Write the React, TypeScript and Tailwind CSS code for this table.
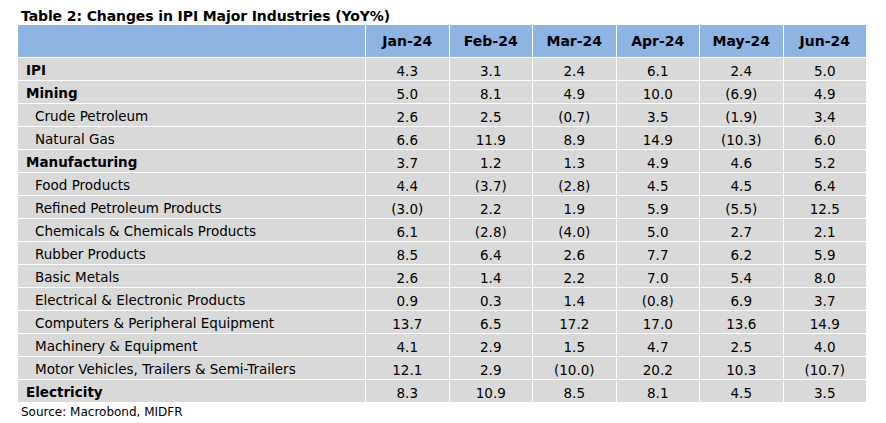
import React from "react";

type Row = { label: string; kind: "main" | "sub"; vals: string[] };

const months = ["Jan-24", "Feb-24", "Mar-24", "Apr-24", "May-24", "Jun-24"];

const rows: Row[] = [
  { label: "IPI", kind: "main", vals: ["4.3", "3.1", "2.4", "6.1", "2.4", "5.0"] },
  { label: "Mining", kind: "main", vals: ["5.0", "8.1", "4.9", "10.0", "(6.9)", "4.9"] },
  { label: "Crude Petroleum", kind: "sub", vals: ["2.6", "2.5", "(0.7)", "3.5", "(1.9)", "3.4"] },
  { label: "Natural Gas", kind: "sub", vals: ["6.6", "11.9", "8.9", "14.9", "(10.3)", "6.0"] },
  { label: "Manufacturing", kind: "main", vals: ["3.7", "1.2", "1.3", "4.9", "4.6", "5.2"] },
  { label: "Food Products", kind: "sub", vals: ["4.4", "(3.7)", "(2.8)", "4.5", "4.5", "6.4"] },
  { label: "Refined Petroleum Products", kind: "sub", vals: ["(3.0)", "2.2", "1.9", "5.9", "(5.5)", "12.5"] },
  { label: "Chemicals & Chemicals Products", kind: "sub", vals: ["6.1", "(2.8)", "(4.0)", "5.0", "2.7", "2.1"] },
  { label: "Rubber Products", kind: "sub", vals: ["8.5", "6.4", "2.6", "7.7", "6.2", "5.9"] },
  { label: "Basic Metals", kind: "sub", vals: ["2.6", "1.4", "2.2", "7.0", "5.4", "8.0"] },
  { label: "Electrical & Electronic Products", kind: "sub", vals: ["0.9", "0.3", "1.4", "(0.8)", "6.9", "3.7"] },
  { label: "Computers & Peripheral Equipment", kind: "sub", vals: ["13.7", "6.5", "17.2", "17.0", "13.6", "14.9"] },
  { label: "Machinery & Equipment", kind: "sub", vals: ["4.1", "2.9", "1.5", "4.7", "2.5", "4.0"] },
  { label: "Motor Vehicles, Trailers & Semi-Trailers", kind: "sub", vals: ["12.1", "2.9", "(10.0)", "20.2", "10.3", "(10.7)"] },
  { label: "Electricity", kind: "main", vals: ["8.3", "10.9", "8.5", "8.1", "4.5", "3.5"] },
];

export default function App() {
  return (
    <div className="w-[886px] h-[423px] bg-white pl-[18px] pt-[7px] font-['DejaVu_Sans',sans-serif] text-black">
      {/* title */}
      <h3 className="pl-[3px] text-[14px] leading-[18px] font-bold tracking-[-0.1px]">
        Table 2: Changes in IPI Major Industries (YoY%)
      </h3>

      {/* table */}
      <div className="w-[848px] grid grid-cols-[347px_repeat(6,minmax(0,1fr))] gap-px bg-white">
        <div className="h-[32px] bg-[#8eb4e3]" />
        {months.map((m) => (
          <div key={m} className="h-[32px] bg-[#8eb4e3] flex items-center justify-center text-[14px] font-bold">
            {m}
          </div>
        ))}

        {rows.map((r) => (
          <React.Fragment key={r.label}>
            <div
              className={
                r.kind === "main"
                  ? "h-[22px] bg-[#d9d9d9] flex items-center pt-[2px] pl-[8px] text-[13.5px] font-bold"
                  : "h-[22px] bg-[#d9d9d9] flex items-center pt-[2px] pl-[17px] text-[13.5px]"
              }
            >
              {r.label}
            </div>
            {r.vals.map((v, i) => (
              <div key={i} className="h-[22px] bg-[#d9d9d9] flex items-center justify-center pt-[4px] text-[13.5px]">
                {v}
              </div>
            ))}
          </React.Fragment>
        ))}
      </div>

      <p className="pl-[3px] pt-[2px] text-[12px] leading-[16px]">Source: Macrobond, MIDFR</p>
    </div>
  );
}
